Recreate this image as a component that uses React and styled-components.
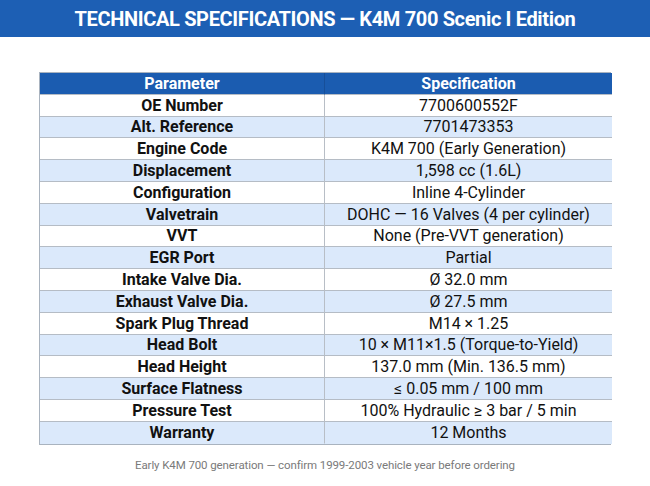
import React from "react";
import styled, { createGlobalStyle } from "styled-components";

const Global = createGlobalStyle`
  html, body { margin: 0; padding: 0; background: #ffffff; }
  body { font-family: Roboto, "Liberation Sans", Arial, sans-serif; }
`;

const Page = styled.div`
  width: 650px;
  height: 486px;
  display: flex;
  flex-direction: column;
  align-items: center;
  background: #ffffff;
`;

const TitleBar = styled.header`
  width: 100%;
  height: 37px;
  background: #1d5fb4;
  color: #ffffff;
  display: flex;
  align-items: center;
  justify-content: center;
  font-size: 20px;
  font-weight: 700;
  letter-spacing: -0.35px;
`;

const Table = styled.div`
  margin-top: 35px;
  width: 572px;
  display: grid;
  grid-template-columns: 285px 287px;
  grid-auto-rows: 21.8px;
  border: 1px solid #a9b3bf;
  box-sizing: border-box;
`;

const Cell = styled.div`
  display: flex;
  align-items: center;
  justify-content: center;
  font-size: 16px;
  letter-spacing: 0;
  color: ${(p) => (p.$head ? "#ffffff" : "#111111")};
  font-weight: ${(p) => (p.$bold || p.$head ? 700 : 400)};
  background: ${(p) => (p.$head ? "#1b5cb0" : p.$alt ? "#dbe9fb" : "#ffffff")};
  border-bottom: 1px solid ${(p) => (p.$last ? "transparent" : "#b5bcc5")};
  border-right: ${(p) => (p.$left ? `1px solid ${p.$head ? "#174f99" : "#b8bec6"}` : "none")};
  box-sizing: border-box;
  white-space: nowrap;
`;

const Note = styled.p`
  margin: 13px 0 0;
  font-size: 11.5px;
  color: #7a7a7a;
  letter-spacing: -0.1px;
`;

const rows = [
  ["OE Number", "7700600552F"],
  ["Alt. Reference", "7701473353"],
  ["Engine Code", "K4M 700 (Early Generation)"],
  ["Displacement", "1,598 cc (1.6L)"],
  ["Configuration", "Inline 4-Cylinder"],
  ["Valvetrain", "DOHC — 16 Valves (4 per cylinder)"],
  ["VVT", "None (Pre-VVT generation)"],
  ["EGR Port", "Partial"],
  ["Intake Valve Dia.", "Ø 32.0 mm"],
  ["Exhaust Valve Dia.", "Ø 27.5 mm"],
  ["Spark Plug Thread", "M14 × 1.25"],
  ["Head Bolt", "10 × M11×1.5 (Torque-to-Yield)"],
  ["Head Height", "137.0 mm (Min. 136.5 mm)"],
  ["Surface Flatness", "≤ 0.05 mm / 100 mm"],
  ["Pressure Test", "100% Hydraulic ≥ 3 bar / 5 min"],
  ["Warranty", "12 Months"],
];

export default function App() {
  return (
    <>
      <Global />
      <Page>
        <TitleBar>TECHNICAL SPECIFICATIONS — K4M 700 Scenic I Edition</TitleBar>
        <Table>
          <Cell $head $left>Parameter</Cell>
          <Cell $head>Specification</Cell>
          {rows.map(([k, v], i) => {
            const alt = i % 2 === 1;
            const last = i === rows.length - 1;
            return (
              <React.Fragment key={k}>
                <Cell $bold $left $alt={alt} $last={last}>{k}</Cell>
                <Cell $alt={alt} $last={last}>{v}</Cell>
              </React.Fragment>
            );
          })}
        </Table>
        <Note>Early K4M 700 generation — confirm 1999-2003 vehicle year before ordering</Note>
      </Page>
    </>
  );
}
